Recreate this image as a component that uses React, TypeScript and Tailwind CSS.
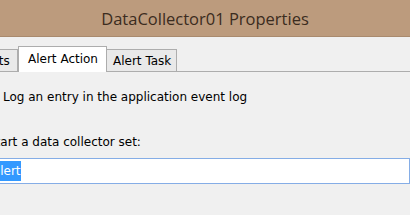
export default function App() {
  return (
    <div className="w-[410px] h-[215px] overflow-hidden bg-[#f0f0f0] font-['DejaVu_Sans',sans-serif] text-[12px] text-black">
      <div className="h-[37px] bg-[#bc9b7d] flex items-center justify-center border-b border-[#a98a6e]">
        <span className="font-['Open_Sans',sans-serif] text-[16.5px] text-[#3b2c20] pt-[2px]">DataCollector01 Properties</span>
      </div>
      <div className="h-[35px] flex items-end border-b border-[#adadad] -ml-[36px]">
        <div className="w-[54px] h-[22px] pl-[10px] flex items-center whitespace-nowrap border border-b-0 border-[#adadad] bg-[#e9e9e9]">Alerts</div>
        <div className="w-[89px] h-[26px] -mb-px pl-[9px] flex items-center whitespace-nowrap pb-[2px] border border-b-0 border-[#adadad] bg-white">Alert Action</div>
        <div className="w-[70px] h-[22px] pl-[6px] flex items-center whitespace-nowrap border border-l-0 border-b-0 border-[#adadad] bg-[#e9e9e9]">Alert Task</div>
      </div>
      <div className="pt-[17px] leading-[16px]">
        <div className="flex items-center -ml-[21px] gap-[11px]">
          <span className="w-[13px] h-[13px] border border-[#333] bg-white"></span>
          <span>Log an entry in the application event log</span>
        </div>
        <div className="mt-[29px] -ml-[12px]">Start a data collector set:</div>
        <div className="mt-[8px] -ml-[11px] h-[26px] border border-[#85ade6] bg-white flex items-center">
          <span className="pl-[2px]">A</span>
          <span className="bg-[#3399ff] text-white leading-[20px]">lert</span>
        </div>
      </div>
    </div>
  );
}
